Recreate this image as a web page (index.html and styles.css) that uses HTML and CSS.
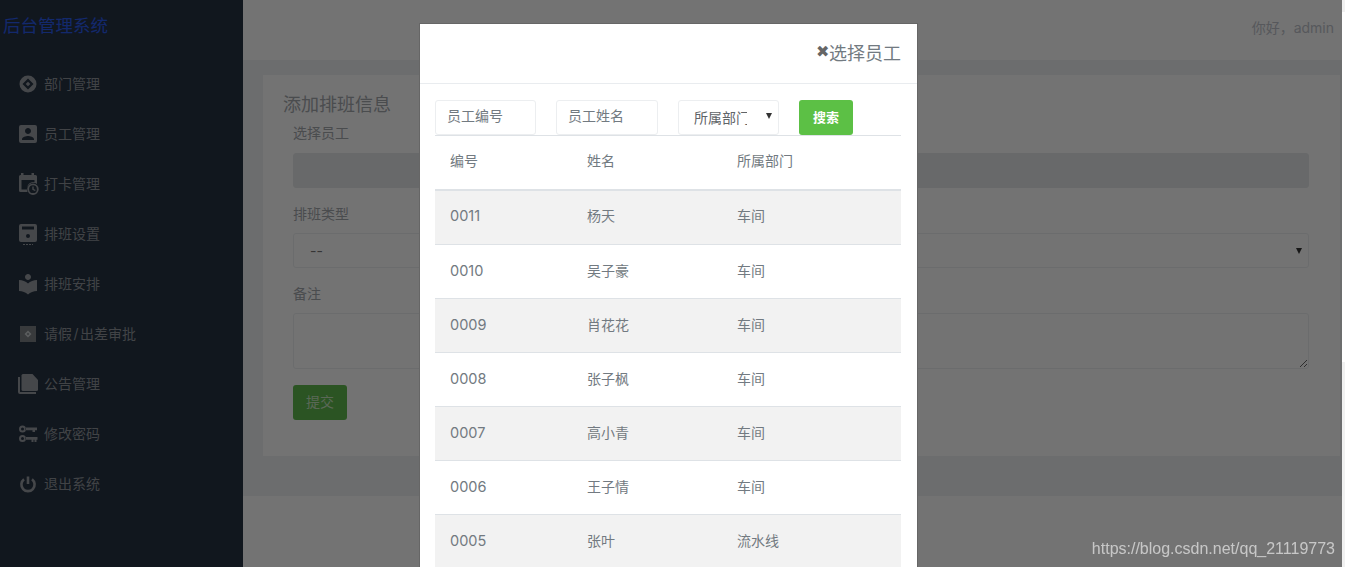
FILE: index.html
```html
<!DOCTYPE html>
<html lang="zh-CN">
<head>
<meta charset="utf-8">
<title>后台管理系统</title>
<link rel="stylesheet" href="styles.css">
</head>
<body>
<div class="app">
  <aside class="sidebar">
    <div class="logo">后台管理系统</div>
    <nav class="nav">
      <a class="nav-item"><svg class="nav-icon" viewBox="0 0 24 24"><path fill-rule="evenodd" d="M12 3.500a8.500 8.500 0 1 0 0 17 8.500 8.500 0 0 0 0-17zm0 3 5.500 5.500-5.500 5.500L6.500 12 12 6.500zm0 3.200L9.700 12l2.300 2.300 2.300-2.300L12 9.700z"/></svg><span class="nav-text">部门管理</span></a>
      <a class="nav-item"><svg class="nav-icon" viewBox="0 0 24 24"><path d="M3 5v14a2 2 0 0 0 2 2h14a2 2 0 0 0 2-2V5a2 2 0 0 0-2-2H5a2 2 0 0 0-2 2zm12 4c0 1.660-1.340 3-3 3s-3-1.340-3-3 1.340-3 3-3 3 1.340 3 3zm-9 8c0-2 4-3.100 6-3.100s6 1.100 6 3.100v1H6v-1z"/></svg><span class="nav-text">员工管理</span></a>
      <a class="nav-item"><svg class="nav-icon" viewBox="0 0 24 24"><path fill-rule="evenodd" d="M5 1h2.500v2h8V1H18v2h1.500A1.500 1.500 0 0 1 21 4.500V12a6.500 6.500 0 0 0-9.500 8H4.500A1.500 1.500 0 0 1 3 18.500v-14A1.500 1.500 0 0 1 4.500 3H5V1zM5.500 8v9.500h5.600A6.500 6.500 0 0 1 18.500 10V8h-13z"/><path fill-rule="evenodd" d="M17 11.500a5.700 5.700 0 1 0 0 11.400 5.700 5.700 0 0 0 0-11.400zm0 1.800a3.900 3.900 0 1 1 0 7.800 3.900 3.900 0 0 1 0-7.800zM16.300 14.500v3.200l2.700 1.400.7-1.200-2-1v-2.400h-1.400z"/></svg><span class="nav-text">打卡管理</span></a>
      <a class="nav-item"><svg class="nav-icon" viewBox="0 0 24 24"><path fill-rule="evenodd" d="M5 2h14a2 2 0 0 1 2 2v14a2 2 0 0 1-2 2H5a2 2 0 0 1-2-2V4a2 2 0 0 1 2-2zm1 2.500v3h12v-3H6zm6 7.500a2 2 0 1 0 0 4 2 2 0 0 0 0-4z"/><path d="M7 22h2v1H7zM10 22h2v1h-2zM13 22h2v1h-2zM16 22h1v1h-1z"/></svg><span class="nav-text">排班设置</span></a>
      <a class="nav-item"><svg class="nav-icon" viewBox="0 0 24 24"><path d="M12 11.550C9.640 9.350 6.480 8 3 8v11c3.480 0 6.640 1.350 9 3.550 2.360-2.190 5.520-3.550 9-3.550V8c-3.480 0-6.640 1.350-9 3.550zM12 8c1.660 0 3-1.340 3-3s-1.340-3-3-3-3 1.340-3 3 1.340 3 3 3z"/></svg><span class="nav-text">排班安排</span></a>
      <a class="nav-item"><svg class="nav-icon" viewBox="0 0 24 24"><path class="icon-dim" d="M4 4h16v16H4z"/><path class="icon-light" fill-rule="evenodd" d="M12 8.500 8.500 12l3.500 3.500 3.500-3.500L12 8.500zm0 2.200 1.300 1.300-1.300 1.300-1.300-1.300 1.300-1.300z"/></svg><span class="nav-text">请假<span class="slash">/</span>出差审批</span></a>
      <a class="nav-item"><svg class="nav-icon" viewBox="0 0 24 24"><path d="M2 5h2v15h16v2H4a2 2 0 0 1-2-2V5z"/><path d="M7 2h9.500l5.500 6v9.500a1.500 1.500 0 0 1-1.500 1.500H7a1.500 1.500 0 0 1-1.500-1.500v-14A1.500 1.500 0 0 1 7 2z"/></svg><span class="nav-text">公告管理</span></a>
      <a class="nav-item"><svg class="nav-icon" viewBox="0 0 24 24"><path fill-rule="evenodd" d="M6.500 3.500a3.500 3.500 0 1 1 0 7 3.500 3.500 0 0 1 0-7zm0 2a1.500 1.500 0 1 0 0 3 1.500 1.500 0 0 0 0-3zM9.500 5.500H21v2.800h-2V10h-2.500V8.300H9.500V5.500zM6.500 13a3.500 3.500 0 1 1 0 7 3.500 3.500 0 0 1 0-7zm0 2a1.500 1.500 0 1 0 0 3 1.500 1.500 0 0 0 0-3zM9.500 15H21.500v2.800h-1V20h-2v-2.200h-1V20h-2v-2.200H9.500V15z"/></svg><span class="nav-text">修改密码</span></a>
      <a class="nav-item"><svg class="nav-icon icon-stroke" viewBox="0 0 24 24"><path d="M8 7.300a6.600 6.600 0 1 0 8 0M12 4.500v7.500"/></svg><span class="nav-text">退出系统</span></a>
    </nav>
  </aside>
  <div class="main">
    <header class="topbar">你好，admin</header>
    <section class="content">
      <div class="card">
        <h2 class="card-title">添加排班信息</h2>
        <form class="form">
          <div class="group">
            <label class="label">选择员工</label>
            <input class="control control-disabled" disabled>
          </div>
          <div class="group">
            <label class="label">排班类型</label>
            <div class="select-wrap">
              <select class="control control-select"><option>--</option></select>
            </div>
          </div>
          <div class="group">
            <label class="label">备注</label>
            <textarea class="control control-area"></textarea>
          </div>
          <button type="button" class="submit">提交</button>
        </form>
      </div>
    </section>
  </div>
</div>

<div class="overlay">
  <div class="modal">
    <div class="modal-header"><span class="close">✖</span><span class="modal-title">选择员工</span></div>
    <div class="modal-body">
      <div class="search">
        <input class="search-input" placeholder="员工编号">
        <input class="search-input" placeholder="员工姓名">
        <div class="search-select-wrap">
          <select class="search-select"><option>所属部门</option></select>
        </div>
        <button type="button" class="search-btn">搜索</button>
      </div>
      <table class="table">
        <colgroup><col class="col-a"><col class="col-b"><col class="col-c"></colgroup>
        <thead><tr><th>编号</th><th>姓名</th><th>所属部门</th></tr></thead>
        <tbody>
          <tr><td class="num">0011</td><td>杨天</td><td>车间</td></tr>
          <tr><td class="num">0010</td><td>吴子豪</td><td>车间</td></tr>
          <tr><td class="num">0009</td><td>肖花花</td><td>车间</td></tr>
          <tr><td class="num">0008</td><td>张子枫</td><td>车间</td></tr>
          <tr><td class="num">0007</td><td>高小青</td><td>车间</td></tr>
          <tr><td class="num">0006</td><td>王子情</td><td>车间</td></tr>
          <tr><td class="num">0005</td><td>张叶</td><td>流水线</td></tr>
        </tbody>
      </table>
    </div>
  </div>
</div>

<div class="scrollbar"><div class="scrollbar-thumb"></div></div>
<div class="watermark">https://blog.csdn.net/qq_21119773</div>
</body>
</html>
```

FILE: styles.css
```css
* { box-sizing: border-box; }
html, body { margin: 0; height: 100%; overflow: hidden; }
body {
  font-family: Inter, "Noto Sans CJK SC", sans-serif;
  font-size: 14px;
  color: #6c757d;
  background: #fff;
}
.app { display: flex; height: 100vh; }

.sidebar { width: 243px; flex: none; background: #263344; }
.logo {
  height: 59px;
  padding: 15px 0 0 3px;
  font-size: 17.5px;
  line-height: 22px;
  color: #2a5cf0;
}
.nav { display: flex; flex-direction: column; }
.nav-item {
  display: flex;
  align-items: center;
  gap: 4px;
  height: 50px;
  padding-left: 16px;
  color: #90969c;
}
.nav-text { padding-bottom: 2px; }
.slash { margin: 0 1.5px; }
.nav-icon { width: 24px; height: 24px; fill: #9a9ea4; flex: none; }
.nav-icon .icon-dim { fill: #7c8086; }
.nav-icon .icon-light { fill: #c8ccd0; }
.icon-stroke { fill: none; stroke: #9a9ea4; stroke-width: 2.6; }

.main { flex: 1; min-width: 0; }
.topbar {
  display: flex;
  align-items: center;
  justify-content: flex-end;
  height: 60px;
  padding: 0 11px 6px 0;
  background: #fff;
  color: #c0c4cc;
}
.content {
  height: 436px;
  padding: 15px 5px 0 20px;
  background: #f0f2f3;
}
.card { height: 381px; padding: 19px 31px 0 20px; background: #fff; }
.card-title {
  margin: 0;
  font-size: 18px;
  line-height: 22px;
  font-weight: 400;
  color: #a4a8ae;
}
.form { padding: 7px 0 0 10px; }
.group { margin-bottom: 16px; }
.label {
  display: block;
  height: 20px;
  margin-bottom: 10px;
  line-height: 20px;
  color: #a4a8ae;
}
.group + .group .label { margin-bottom: 9px; }
.control {
  display: block;
  width: 100%;
  height: 35px;
  border: 1px solid #eef0f2;
  border-radius: 3px;
  background: #fff;
  font: inherit;
  color: #6c757d;
}
.control-disabled { background: #e6e8ea; border-color: #e6e8ea; }
.control-select { appearance: none; padding: 0 12px 0 16px; color: #777; }
.control-area { height: 56px; resize: vertical; }
.select-wrap, .search-select-wrap { position: relative; }
.select-wrap::after, .search-select-wrap::after {
  content: "";
  position: absolute;
  top: 15px;
  border-left: 3px solid transparent;
  border-right: 3px solid transparent;
  border-top: 6px solid #333;
}
.select-wrap::after { right: 7px; }
.submit {
  display: block;
  width: 54px;
  height: 35px;
  padding: 0 0 4px;
  border: 0;
  border-radius: 3px;
  background: #60ba4e;
  font: inherit;
  color: #c8e6c0;
}

.overlay {
  position: fixed;
  inset: 0;
  display: flex;
  justify-content: center;
  align-items: flex-start;
  padding: 23px 8px 0 0;
  background: rgba(0, 0, 0, .55);
}
.modal {
  width: 499px;
  background: #fff;
  border: 1px solid #666;
  border-bottom: 0;
  flex: none;
}
.modal-header {
  display: flex;
  justify-content: flex-end;
  align-items: center;
  height: 60px;
  padding: 0 16px 0 0;
  border-bottom: 1px solid #e9ecef;
}
.close {
  font-family: "DejaVu Sans", sans-serif;
  font-size: 16px;
  line-height: 22px;
  width: 12px;
  margin-top: -4px;
  color: #666;
  white-space: nowrap;
  text-indent: -1px;
}
.modal-title { font-size: 18px; line-height: 22px; color: #727a81; }
.modal-body { padding: 16px 15px 0; }
.search { display: flex; gap: 20px; height: 35px; }
.search-input {
  width: 101px;
  height: 35px;
  padding: 0 11px 4px;
  border: 1px solid #eceef0;
  border-radius: 3px;
  font: inherit;
  color: #6c757d;
  background: #fff;
}
.search-input:nth-child(2) { width: 102px; }
.search-input::placeholder { color: #727a81; opacity: 1; }
.search-select {
  appearance: none;
  display: block;
  width: 101px;
  height: 35px;
  padding: 0 31px 0 15px;
  border: 1px solid #eceef0;
  border-radius: 3px;
  font: inherit;
  color: #5f6468;
  background: #fff;
}
.search-select-wrap::after { right: 7px; top: 13px; }
.search-btn {
  width: 54px;
  height: 35px;
  padding: 0 0 3px;
  border: 0;
  border-radius: 3px;
  background: #5cc045;
  font: inherit;
  font-size: 13px;
  font-weight: 700;
  color: #fff;
}
.table {
  width: 466px;
  table-layout: fixed;
  border-collapse: collapse;
  border-top: 1px solid #dee2e6;
}
.col-a { width: 137px; }
.col-b { width: 150px; }
.col-c { width: 179px; }
.table th {
  height: 54px;
  padding: 0 15px 4px;
  text-align: left;
  font-weight: 400;
  color: #727a81;
  border-bottom: 2px solid #dee2e6;
}
.table td {
  height: 54px;
  padding: 0 15px 4px;
  color: #727a81;
  border-bottom: 1px solid #dee2e6;
}
.table tbody tr:first-child td { height: 55px; padding-bottom: 5px; }
.table .num { font-size: 14.5px; padding-bottom: 2px; }
.table tbody tr:first-child .num { padding-bottom: 3px; }
.table tbody tr:nth-child(odd) { background: #f2f2f2; }

.scrollbar {
  position: fixed;
  top: 0;
  right: 0;
  bottom: 0;
  width: 3px;
  background: #f1f1f1;
}
.scrollbar-thumb { height: 350px; margin-top: 12px; background: #fff; }
.watermark {
  position: fixed;
  right: 10px;
  bottom: 8px;
  font-family: "Liberation Sans", sans-serif;
  font-size: 16px;
  line-height: 20px;
  color: rgba(255, 255, 255, .6);
}
```
